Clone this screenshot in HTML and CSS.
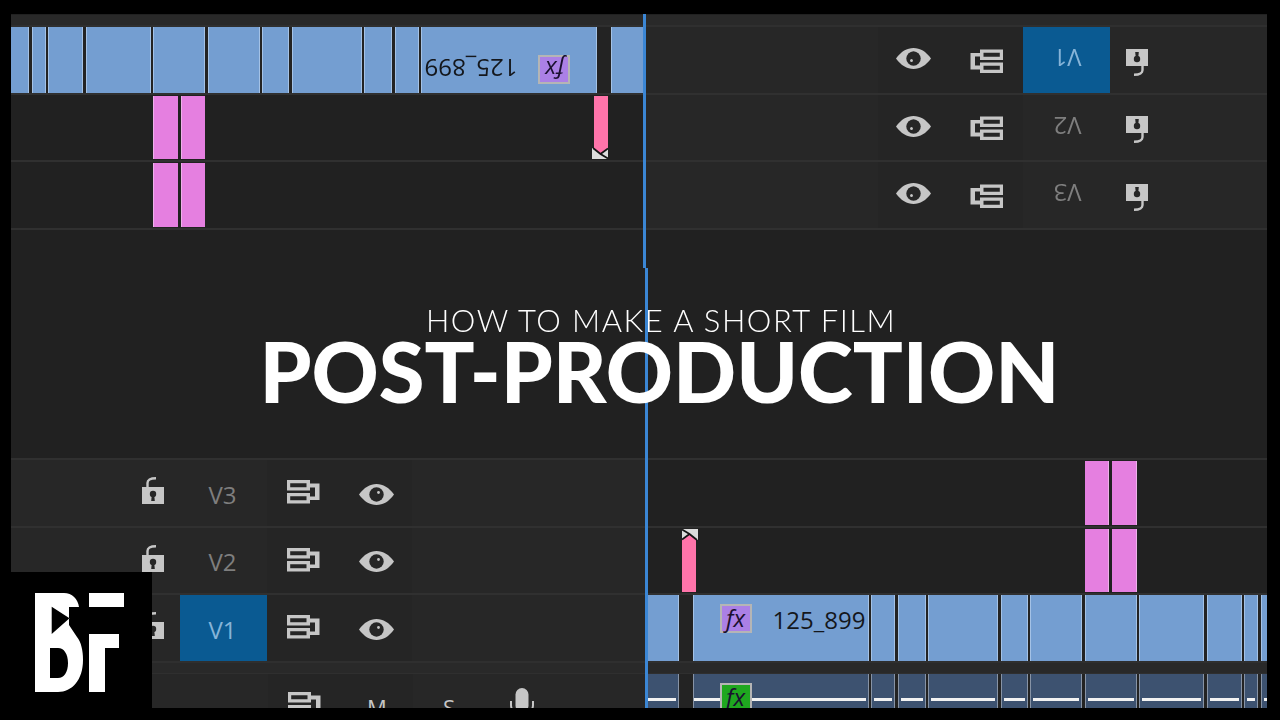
FILE: index.html
```html
<!DOCTYPE html>
<html lang="en">
<head>
    <meta charset="UTF-8">
    <meta name="viewport" content="width=device-width, initial-scale=1.0">
    <link rel="stylesheet" href="styles.css">
    <title>How to make a short film: Post-production</title>
</head>
<body>
    <svg class="defs" width="0" height="0">
        <symbol id="eye" viewBox="0 0 35 21">
            <path d="M0 10.5C5 3.5 11 0 17.5 0S30 3.5 35 10.5C30 17.5 24 21 17.5 21S5 17.5 0 10.5Z" fill="#c6c6c6"/>
            <circle cx="17.5" cy="10.5" r="7.2" fill="#262626"/>
            <circle cx="19.5" cy="8.5" r="1.4" fill="#c6c6c6"/>
        </symbol>
        <symbol id="sync" viewBox="0 0 33 24">
            <path d="M0 0H23V3.5H32.5V20H23V23.5H0V13H23V16.500H28V7.500H23V10.500H0ZM3.200 3.200V7.300H19.500V3.200ZM3.200 16.200V20.300H19.500V16.200Z" fill="#c6c6c6" fill-rule="evenodd"/>
        </symbol>
        <symbol id="lock" viewBox="0 0 22 27">
            <path d="M0 10H22V27H0Z" fill="#c6c6c6"/>
            <circle cx="11" cy="17" r="3.2" fill="#262626"/>
            <path d="M9.8 18H12.2L12.8 24H9.2Z" fill="#262626"/>
            <path d="M5.5 10V6C5.5 3 8 1.3 14 1.3" fill="none" stroke="#c6c6c6" stroke-width="2.4"/>
        </symbol>
        <symbol id="mic" viewBox="0 0 24 30">
            <rect x="5.5" y="0" width="13" height="24" rx="6.5" fill="#c6c6c6"/>
            <path d="M1 13V17C1 23 6 26 12 26S23 23 23 17V13" fill="none" stroke="#c6c6c6" stroke-width="2"/>
        </symbol>
        <symbol id="cross" viewBox="0 0 16 13">
            <path d="M0 0H16V11H0Z" fill="#dcdcdc"/>
            <path d="M7.500 5L14 11V13H0V11Z" fill="#ff74aa"/>
            <path d="M0 0.500L7.500 5L15 11M0 10.500L7.500 5" fill="none" stroke="#141414" stroke-width="1.8"/>
        </symbol>
    </svg>

    <div class="screen">
        <!-- same timeline again, flipped -->
        <div class="half flipped">
            <div class="track">
                <div class="head">
                    <div class="cell lock-cell"><svg class="lock"><use href="#lock"/></svg></div>
                    <div class="cell name">V3</div>
                    <div class="cell sync-cell"><svg class="sync"><use href="#sync"/></svg></div>
                    <div class="cell eye-cell"><svg class="eye"><use href="#eye"/></svg></div>
                </div>
                <div class="lane">
                    <div class="pink first-pink"></div>
                    <div class="pink second-pink"></div>
                </div>
            </div>
            <div class="track">
                <div class="head">
                    <div class="cell lock-cell"><svg class="lock"><use href="#lock"/></svg></div>
                    <div class="cell name">V2</div>
                    <div class="cell sync-cell"><svg class="sync"><use href="#sync"/></svg></div>
                    <div class="cell eye-cell"><svg class="eye"><use href="#eye"/></svg></div>
                </div>
                <div class="lane">
                    <div class="transition"><svg class="cross"><use href="#cross"/></svg></div>
                    <div class="pink pair-pink"></div>
                    <div class="pink second-pink"></div>
                </div>
            </div>
            <div class="track">
                <div class="head">
                    <div class="cell lock-cell"><svg class="lock"><use href="#lock"/></svg></div>
                    <div class="cell name active">V1</div>
                    <div class="cell sync-cell"><svg class="sync"><use href="#sync"/></svg></div>
                    <div class="cell eye-cell"><svg class="eye"><use href="#eye"/></svg></div>
                </div>
                <div class="lane video">
                    <div class="clip" style="width:34px"></div>
                    <div class="clip main" style="width:176px">
                        <span class="fx">fx</span>
                        <span class="clip-name">125_899</span>
                    </div>
                    <div class="clip" style="width:24px"></div>
                    <div class="clip" style="width:28px"></div>
                    <div class="clip" style="width:70px"></div>
                    <div class="clip" style="width:27px"></div>
                    <div class="clip" style="width:52px"></div>
                    <div class="clip" style="width:52px"></div>
                    <div class="clip" style="width:65px"></div>
                    <div class="clip" style="width:35px"></div>
                    <div class="clip" style="width:14px"></div>
                    <div class="clip" style="width:20px"></div>
                </div>
            </div>
            <div class="band"></div>
        </div>

        <div class="half">
            <div class="track">
                <div class="head">
                    <div class="cell lock-cell"><svg class="lock"><use href="#lock"/></svg></div>
                    <div class="cell name">V3</div>
                    <div class="cell sync-cell"><svg class="sync"><use href="#sync"/></svg></div>
                    <div class="cell eye-cell"><svg class="eye"><use href="#eye"/></svg></div>
                </div>
                <div class="lane">
                    <div class="pink first-pink"></div>
                    <div class="pink second-pink"></div>
                </div>
            </div>
            <div class="track">
                <div class="head">
                    <div class="cell lock-cell"><svg class="lock"><use href="#lock"/></svg></div>
                    <div class="cell name">V2</div>
                    <div class="cell sync-cell"><svg class="sync"><use href="#sync"/></svg></div>
                    <div class="cell eye-cell"><svg class="eye"><use href="#eye"/></svg></div>
                </div>
                <div class="lane">
                    <div class="transition"><svg class="cross"><use href="#cross"/></svg></div>
                    <div class="pink pair-pink"></div>
                    <div class="pink second-pink"></div>
                </div>
            </div>
            <div class="track">
                <div class="head">
                    <div class="cell lock-cell"><svg class="lock"><use href="#lock"/></svg></div>
                    <div class="cell name active">V1</div>
                    <div class="cell sync-cell"><svg class="sync"><use href="#sync"/></svg></div>
                    <div class="cell eye-cell"><svg class="eye"><use href="#eye"/></svg></div>
                </div>
                <div class="lane video">
                    <div class="clip" style="width:34px"></div>
                    <div class="clip main" style="width:176px">
                        <span class="fx">fx</span>
                        <span class="clip-name">125_899</span>
                    </div>
                    <div class="clip" style="width:24px"></div>
                    <div class="clip" style="width:28px"></div>
                    <div class="clip" style="width:70px"></div>
                    <div class="clip" style="width:27px"></div>
                    <div class="clip" style="width:52px"></div>
                    <div class="clip" style="width:52px"></div>
                    <div class="clip" style="width:65px"></div>
                    <div class="clip" style="width:35px"></div>
                    <div class="clip" style="width:14px"></div>
                    <div class="clip" style="width:20px"></div>
                </div>
            </div>
            <div class="band"></div>
            <div class="audio">
                <div class="head">
                    <div class="cell lock-cell"></div>
                    <div class="cell name"></div>
                    <div class="cell sync-cell"><svg class="sync"><use href="#sync"/></svg></div>
                    <div class="cell eye-cell letter">M</div>
                    <div class="cell solo-cell letter">S</div>
                    <div class="cell mic-cell"><svg class="mic"><use href="#mic"/></svg></div>
                </div>
                <div class="lane wave">
                    <div class="clip" style="width:34px"><i></i></div>
                    <div class="clip main" style="width:176px"><span class="fx green">fx</span><i></i></div>
                    <div class="clip" style="width:24px"><i></i></div>
                    <div class="clip" style="width:28px"><i></i></div>
                    <div class="clip" style="width:70px"><i></i></div>
                    <div class="clip" style="width:27px"><i></i></div>
                    <div class="clip" style="width:52px"><i></i></div>
                    <div class="clip" style="width:52px"><i></i></div>
                    <div class="clip" style="width:65px"><i></i></div>
                    <div class="clip" style="width:35px"><i></i></div>
                    <div class="clip" style="width:14px"><i></i></div>
                    <div class="clip" style="width:20px"><i></i></div>
                </div>
            </div>
        </div>

        <div class="playhead upper"></div>
        <div class="playhead lower"></div>
    </div>

    <div class="title">
        <p class="kicker">HOW TO MAKE A SHORT FILM</p>
        <h1>POST-PRODUCTION</h1>
    </div>

    <div class="logo">
        <svg width="152" height="148" viewBox="0 0 152 148">
            <path fill="#fff" fill-rule="evenodd" d="M35 21H64C72 21 78 27 79 35H69V53L77 65C81 70 83 78 83 88C83 108 72 120 58 120H35ZM51.7 34.700V62L69.500 46.300ZM50 76V106H58C64 106 68 100 68 91C68 82 64 76 58 76Z"/>
            <path fill="#fff" d="M89 21H124V35H89ZM89 62H119V76H105V120H89Z"/>
        </svg>
    </div>
</body>
</html>
```

FILE: styles.css
```css
*{
    margin: 0;
    padding: 0;
    box-sizing: border-box;
}
html, body{
    height: 100%;
    overflow: hidden;
}
body{
    background: #000;
    padding: 14px 13px 12px 11px;
    font-family: 'Open Sans', sans-serif;
}
.defs{
    display: block;
}

.screen{
    position: relative;
    height: 694px;
    background: #212121;
    display: flex;
    flex-direction: column;
    justify-content: space-between;
    overflow: hidden;
}
.half{
    height: 250px;
    overflow: hidden;
    flex: none;
}
.half.flipped{
    height: 216px;
    transform: rotate(180deg);
}
.half.flipped .head{
    width: 622px;
}
.half.flipped .lane{
    width: 634px;
}

.track, .audio{
    display: flex;
    height: 67.5px;
    border-top: 2px solid #303030;
}
.audio{
    height: 67px;
    border-top: 0;
}
.head{
    width: 634px;
    flex: none;
    display: flex;
    justify-content: flex-end;
    background: #272727;
    padding-right: 233px;
}
.cell{
    display: flex;
    align-items: center;
    justify-content: center;
    flex: none;
}
.lock-cell{
    width: 62px;
    padding-left: 8px;
}
.name{
    width: 87px;
    font-size: 24px;
    color: #7e7e7e;
    padding: 3px 2px 0 0;
}
.name.active{
    background: #0a5a92;
    color: #86b4d8;
}
.sync-cell{
    width: 73px;
    background: #252525;
}
.eye-cell{
    width: 72px;
    background: #252525;
}
.audio .head{
    padding-right: 86px;
}
.audio .cell{
    align-items: flex-start;
}
.audio .sync-cell{
    padding-top: 19px;
}
.letter{
    font-size: 22px;
    color: #c6c6c6;
    line-height: 22px;
}
.audio .letter{
    padding-top: 22px;
}
.solo-cell{
    width: 72px;
}
.audio .mic-cell{
    width: 74px;
    padding-top: 14px;
}
.eye{
    width: 35px;
    height: 21px;
    margin-top: 3px;
}
.sync{
    width: 33px;
    height: 24px;
    margin-top: -1px;
}
.lock{
    width: 22px;
    height: 27px;
    margin-top: -4px;
}
.mic{
    width: 24px;
    height: 30px;
}

.lane{
    width: 622px;
    flex: none;
    display: flex;
    background: #212121;
    padding: 1px 0;
}
.pink{
    width: 24px;
    background: #e57fe0;
    flex: none;
    border-right: 1px solid #eeb0ea;
}
.first-pink{
    margin-left: 440px;
}
.pair-pink{
    margin-left: 389px;
}
.second-pink{
    width: 25px;
    margin-left: 3px;
}
.transition{
    position: relative;
    width: 14px;
    flex: none;
    margin-left: 37px;
    background: #ff74aa;
}
.cross{
    position: absolute;
    top: 0;
    left: 0;
    width: 16px;
    height: 13px;
}

.video, .wave{
    gap: 2.5px;
    padding: 0;
    background: #232323;
}
.clip{
    flex: none;
    background: #749ed1;
    border-left: 1px solid #a4c2e6;
    border-right: 1px solid #a4c2e6;
}
.clip:first-child{
    border-left: 0;
}
.main{
    margin-left: 11px;
    display: flex;
    align-items: center;
    padding: 0 0 0 26px;
    gap: 21px;
    white-space: nowrap;
    overflow: hidden;
}
.fx{
    width: 32px;
    height: 29px;
    flex: none;
    border: 2px solid #b5b5b5;
    background: #ab80e6;
    color: #1a1030;
    font: italic 24px/23px 'Open Sans', sans-serif;
    text-align: center;
    margin-top: -18px;
}
.clip-name{
    font-size: 24px;
    color: #14171c;
    margin-top: -16px;
}

.band{
    height: 12px;
    background: #292929;
    border-top: 2px solid #2f2f2f;
}
.half:not(.flipped) .band{
    height: 13px;
    border-bottom: 1px solid #2f2f2f;
}
.wave{
    height: 67px;
}
.wave .clip{
    position: relative;
    background: #3d5270;
    border-color: #8793a5;
}
.wave .main{
    display: block;
    padding-top: 9px;
}
.wave .clip i{
    position: absolute;
    left: 2px;
    right: 2px;
    top: 24px;
    height: 3px;
    background: #f2f2f2;
}
.wave .main i{
    left: 0;
}
.fx.green{
    display: block;
    background: #1fa71f;
    margin: 0;
    position: relative;
    z-index: 1;
}

.playhead{
    position: absolute;
    width: 3px;
    background: #3b86d4;
}
.upper{
    top: 0;
    height: 254px;
    left: 632px;
}
.lower{
    top: 254px;
    bottom: 0;
    left: 634px;
}

.title{
    position: absolute;
    left: 0;
    right: 0;
    top: 300px;
    padding-left: 39px;
    text-align: center;
    color: #fff;
    font-family: Lato, sans-serif;
}
.kicker{
    font-size: 31px;
    line-height: 40px;
    font-weight: 300;
    letter-spacing: 1.5px;
    margin-left: 3px;
}
.title h1{
    font-size: 83px;
    line-height: 84px;
    font-weight: 900;
    margin-top: -11px;
}

.logo{
    position: absolute;
    left: 0;
    top: 572px;
    width: 152px;
    height: 148px;
    background: #000;
}
```
